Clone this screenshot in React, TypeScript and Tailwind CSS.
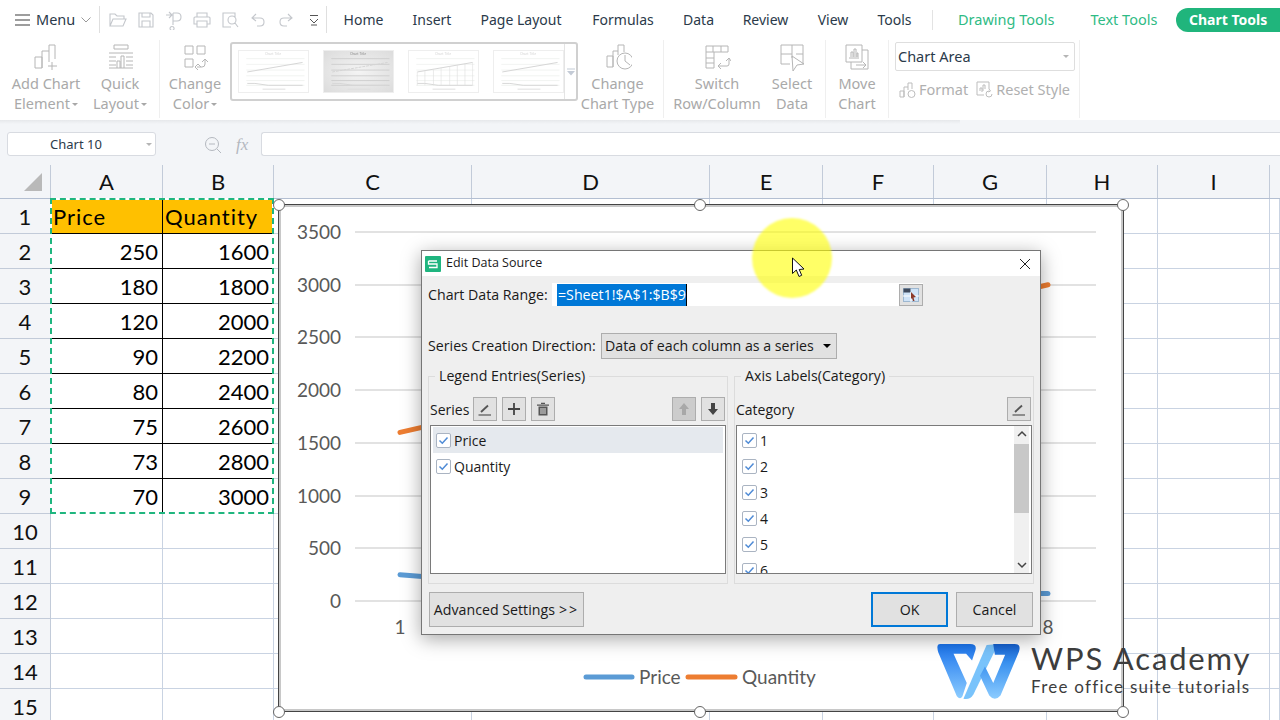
import React from "react";

const UI = { fontFamily: '"Noto Sans", "Open Sans", sans-serif' };
const SHEET = { fontFamily: 'Lato, "Noto Sans", sans-serif' };
const DLG = { fontFamily: '"Open Sans", "Noto Sans", sans-serif' };

function Ic({ w = 28, h = 30, children }: { w?: number; h?: number; children: React.ReactNode }) {
  return (
    <svg width={w} height={h} viewBox={`0 0 ${w} ${h}`} fill="none" stroke="#b6b6b6" strokeWidth="1" className="block shrink-0">
      {children}
    </svg>
  );
}

function Qa({ children }: { children: React.ReactNode }) {
  return (
    <div className="w-[28px] shrink-0 flex items-center justify-center">
      <svg width="20" height="20" viewBox="0 0 20 20" fill="none" stroke="#c4c7cc" strokeWidth="1.1">
        {children}
      </svg>
    </div>
  );
}

function Caret() {
  return <span className="inline-block ml-[2px] mb-[3px] border-x-[3px] border-x-transparent border-t-[3px] border-t-[#a8a8a8]" />;
}

function RBtn({ w, icon, a, b, caret }: { w: string; icon: React.ReactNode; a: string; b: string; caret?: boolean }) {
  return (
    <div className={`${w} flex flex-col items-center shrink-0`}>
      <div className="h-[30px] mt-[2px] flex items-center justify-center">{icon}</div>
      <div className="mt-px text-[14.5px] leading-[20px] text-[#a9a9a9] whitespace-nowrap text-center">{a}</div>
      <div className="text-[14.5px] leading-[20px] text-[#a9a9a9] whitespace-nowrap text-center">
        {b}
        {caret && <Caret />}
      </div>
    </div>
  );
}

function Thumb({ variant }: { variant: 0 | 1 | 2 }) {
  const lines = [8, 14, 20, 26, 31, 36];
  return (
    <svg
      width="71"
      height="43"
      viewBox="0 0 71 43"
      className={`block shrink-0 border border-[#eeeeee] blur-[0.5px] ${
        variant === 1 ? "bg-radial from-[#f4f4f4] to-[#dcdcdc]" : "bg-white"
      }`}
    >
      <text x="35" y="4.5" fontSize="3.5" textAnchor="middle" fill={variant === 1 ? "#8a8a8a" : "#d4d4d4"} stroke="none">
        Chart Title
      </text>
      {lines.map((y) => (
        <line key={y} x1="7" x2="68" y1={y} y2={y} stroke={variant === 1 ? "#cbcbcb" : "#f0f2f0"} strokeWidth={variant === 1 ? 0.9 : 1} />
      ))}
      <path d="M8 22 L66 12" stroke="#d4d4d4" strokeWidth="1" fill="none" strokeDasharray={variant === 1 ? "3 1" : undefined} />
      <path d="M8 34 L16 34 L30 36 L66 36" stroke="#d6d6d6" strokeWidth="1" fill="none" />
      {variant === 2 &&
        [8, 16, 25, 33, 42, 50, 58, 66].map((x) => (
          <line key={x} x1={x} x2={x} y1={22 - (x - 8) * 0.17} y2="36" stroke="#dedede" strokeWidth="0.6" />
        ))}
      <rect x="24" y="39.5" width="24" height="1" fill="#dedede" stroke="none" />
    </svg>
  );
}

const colW = "grid grid-cols-[51px_112px_111px_198px_238px_113px_111px_113px_111px_112px_10px]";
const letters = ["A", "B", "C", "D", "E", "F", "G", "H", "I"];
const rows: [string, string][] = [
  ["Price", "Quantity"],
  ["250", "1600"],
  ["180", "1800"],
  ["120", "2000"],
  ["90", "2200"],
  ["80", "2400"],
  ["75", "2600"],
  ["73", "2800"],
  ["70", "3000"],
];

function Check() {
  return (
    <span className="w-[15px] h-[15px] rounded-[2px] border border-[#aab4c2] bg-white flex items-center justify-center shrink-0">
      <svg width="11" height="11" viewBox="0 0 11 11" fill="none" stroke="#4f8bd6" strokeWidth="1.5">
        <path d="M1.5 5.5 L4.3 8.2 L9.5 2.5" />
      </svg>
    </span>
  );
}

function IconBtn({ children, dim }: { children: React.ReactNode; dim?: boolean }) {
  return (
    <div className={`w-[24px] h-[24px] border border-[#adadad] flex items-center justify-center shrink-0 ${dim ? "bg-[#cccccc]" : "bg-[#e1e1e1]"}`}>
      {children}
    </div>
  );
}

const Pen = () => (
  <svg width="16" height="16" viewBox="0 0 16 16" fill="none" stroke="#555" strokeWidth="1.2">
    <path d="M1.5 14 H14" />
    <path d="M4 11 L11 4.5" strokeWidth="1.8" />
  </svg>
);

function Row({ label, sel }: { label: string; sel?: boolean }) {
  return (
    <div className={`h-[26px] flex items-center gap-[3px] pl-[3px] shrink-0 ${sel ? "bg-[#e5e9ee]" : ""}`}>
      <Check />
      <span className="text-[14px] text-[#1a1a1a]">{label}</span>
    </div>
  );
}

export default function App() {
  const ys = [232, 285, 337, 390, 443, 496, 548, 601];
  const yl = ["3500", "3000", "2500", "2000", "1500", "1000", "500", "0"];
  const px = (i: number) => 400 + (i * 648) / 7;
  const val = (v: number) => 601 - v * 0.1054;
  const price = [250, 180, 120, 90, 80, 75, 73, 70];
  const qty = [1600, 1800, 2000, 2200, 2400, 2600, 2800, 3000];
  const handles = [
    [279, 205],
    [700, 205],
    [1123, 205],
    [279, 712],
    [700, 712],
    [1123, 712],
  ];
  const tabs: [string, string][] = [
    ["Home", "w-[71px]"],
    ["Insert", "w-[66px]"],
    ["Page Layout", "w-[112px]"],
    ["Formulas", "w-[92px]"],
    ["Data", "w-[59px]"],
    ["Review", "w-[75px]"],
    ["View", "w-[60px]"],
    ["Tools", "w-[63px]"],
  ];

  return (
    <div className="relative w-[1280px] h-[720px] overflow-hidden bg-white" style={UI}>
      {/* Tabs bar */}
      <div className="h-[40px] flex items-center bg-white pb-px">
        <div className="w-[15px] shrink-0" />
        <svg className="shrink-0" width="15" height="12" viewBox="0 0 15 12" stroke="#3c3c3c" strokeWidth="1.1">
          <path d="M0 1 H15 M0 6 H15 M0 11 H15" />
        </svg>
        <span className="ml-[6px] w-[39px] shrink-0 text-[14.5px] text-[#2b3a4a]">Menu</span>
        <svg className="ml-[6px] shrink-0" width="10" height="6" viewBox="0 0 10 6" fill="none" stroke="#999">
          <path d="M0.5 0.5 L5 5 L9.5 0.5" />
        </svg>
        <div className="ml-[8px] w-px h-[27px] bg-[#dfdfdf] shrink-0" />
        <div className="w-[4px] shrink-0" />
        <Qa>
          <path d="M2 16 V4 H7 L9 6 H16 V9 M2 16 L5 9 H18 L15 16 Z" />
        </Qa>
        <Qa>
          <path d="M3 3 H15 L17 5 V17 H3 Z M6 3 V7 H14 V3 M6 17 V11 H14 V17" />
        </Qa>
        <Qa>
          <path d="M2 5 H8 M5 2 L8 5 L5 8 M9 3 H13 Q17 3 17 7 Q17 11 13 11 H9 V3 M9 11 V15 M8 16.5 a2 2 0 1 0 0.1 0" />
        </Qa>
        <Qa>
          <path d="M5 7 V3 H15 V7 M2 8 Q2 7 3 7 H17 Q18 7 18 8 V14 H15 M5 14 H2 V8 M5 11 H15 V17 H5 Z" />
        </Qa>
        <Qa>
          <path d="M11 3 H3 V17 H11 M3 3 H15 V8 M8 10 a4 4 0 1 0 8 0 a4 4 0 1 0 -8 0 M15 13 L18 17" />
        </Qa>
        <Qa>
          <path d="M5 8 H12 Q16 8 16 12 Q16 16 12 16 H9 M8 4 L4 8 L8 11" />
        </Qa>
        <Qa>
          <path d="M15 8 H8 Q4 8 4 12 Q4 16 8 16 H11 M12 4 L16 8 L12 11" />
        </Qa>
        <div className="w-[28px] shrink-0 flex items-center justify-center">
          <svg width="12" height="12" viewBox="0 0 12 12" fill="none" stroke="#555">
            <path d="M2 1.5 H10 M2 5 L6 9 L10 5 M3 11 H9" />
          </svg>
        </div>
        <div className="ml-[-2px] w-px h-[27px] bg-[#dfdfdf] shrink-0" />
        <div className="ml-px flex items-center text-[14px] text-[#2b3a4a] whitespace-nowrap shrink-0">
          {tabs.map(([t, w]) => (
            <span key={t} className={`${w} text-center`}>
              {t}
            </span>
          ))}
        </div>
        <div className="ml-[6px] w-px h-[20px] bg-[#e3e3e3] shrink-0" />
        <span className="ml-[25px] shrink-0 text-[14.5px] text-[#2fbb85] whitespace-nowrap">Drawing Tools</span>
        <span className="ml-[36px] shrink-0 text-[14.5px] text-[#2fbb85] whitespace-nowrap">Text Tools</span>
        <div className="ml-auto h-[24px] w-[104px] shrink-0 rounded-l-full bg-[#20b57c] flex items-center pl-[13px] text-[14px] font-bold text-white whitespace-nowrap">
          Chart Tools
        </div>
      </div>

      {/* Ribbon */}
      <div className="relative h-[80px] flex bg-white">
        <div className="flex pl-[8px] pr-[3px] border-r border-[#efefef] h-[78px] w-[160px] shrink-0">
          <RBtn
            w="w-[76px]"
            a="Add Chart"
            b="Element"
            caret
            icon={
              <Ic>
                <path d="M3 15 H10 V26 H3 Z M10 26 V9 H17 V20 M17 9 V3 H23 V17 M20 20 V28 M16 24 H25" />
              </Ic>
            }
          />
          <RBtn
            w="w-[72px]"
            a="Quick"
            b="Layout"
            caret
            icon={
              <Ic>
                <path d="M8 3 H22 V7 H8 Z M3 11 H27 M3 26 H27 M3 15 H10 M3 19 H10 M3 23 H10 M20 15 H27 M20 19 H27 M20 23 H27 M11 26 V19 H14 V26 M15 26 V14 H18 V26" />
              </Ic>
            }
          />
        </div>
        <RBtn
          w="w-[70px]"
          a="Change"
          b="Color"
          caret
          icon={
            <Ic>
              <path d="M4 4 H12 V12 H4 Z M16 4 H24 V12 H16 Z M4 17 H12 V25 H4 Z M16 25 H21 Q24 25 24 22 V17 M21 20 L24 17 L27 20 M20 25 L17 22 M17 28 L14 25 L17 22" />
            </Ic>
          }
        />
        <div className="mt-[2px] h-[59px] w-[348px] shrink-0 rounded-[3px] border-2 border-[#d0d0d0] flex items-center">
          <div className="flex-1 flex items-center pl-[6px] gap-[14px]">
            <Thumb variant={0} />
            <Thumb variant={1} />
            <Thumb variant={2} />
            <Thumb variant={0} />
          </div>
          <div className="w-[13px] h-full border-l border-[#e4e4e4] flex items-center justify-center">
            <svg width="8" height="8" viewBox="0 0 8 8" fill="#c4cbd6">
              <path d="M0 0.5 H8 V1.5 H0 Z M0 3 H8 L4 7.5 Z" />
            </svg>
          </div>
        </div>
        <div className="w-[86px] shrink-0 pr-[6px] border-r border-[#efefef] h-[78px]">
          <RBtn
            w="w-[79px]"
            a="Change"
            b="Chart Type"
            icon={
              <Ic>
                <path d="M3 14 H9 V25 H3 Z M9 25 V9 H14 M14 13 V3 H20 V10 M13 19 a8 8 0 1 0 16 0 a8 8 0 1 0 -16 0 M21 13 V19 L26 23" />
              </Ic>
            }
          />
        </div>
        <div className="flex w-[162px] shrink-0 border-r border-[#efefef] h-[78px]">
          <RBtn
            w="w-[106px]"
            a="Switch"
            b="Row/Column"
            icon={
              <Ic>
                <path d="M3 4 H25 V10 H3 Z M10 4 V10 M18 4 V10 M3 10 V26 H11 V10 M3 16 H11 M3 21 H11 M15 24 H24 Q26 24 26 22 V16 M23 19 L26 16 L28 19 M18 21 L15 24 L18 27" />
              </Ic>
            }
          />
          <RBtn
            w="w-[44px]"
            a="Select"
            b="Data"
            icon={
              <Ic>
                <path d="M3 3 H25 V22 M3 3 V22 H12 M3 12 H14 M14 3 V16 M18 12 H25 M14 14 L26 22 L19 23 L15 29 Z" />
              </Ic>
            }
          />
        </div>
        <div className="w-[63px] shrink-0 border-r border-[#efefef] h-[78px]">
          <RBtn
            w="w-[62px]"
            a="Move"
            b="Chart"
            icon={
              <Ic>
                <path d="M3 3 H19 V20 H3 Z M19 8 H25 V27 H8 V20 M6 16 H16 M8 15 V10 H10 V15 M11 15 V7 H13 V15 M14 15 V11 H15 V15 M13 23 H23 M20 20 L23 23 L20 26" />
              </Ic>
            }
          />
        </div>
        <div className="w-[191px] shrink-0 border-r border-[#efefef] h-[78px] pl-[6px] pt-[2px]">
          <div className="w-[180px] h-[29px] border border-[#dedede] rounded-[2px] flex items-center justify-between pl-[2px] pr-[5px]">
            <span className="text-[14.5px] text-[#2b3a4a]">Chart Area</span>
            <span className="border-x-[3px] border-x-transparent border-t-[3px] border-t-[#b5b5b5]" />
          </div>
          <div className="mt-[8px] pl-[4px] flex items-center text-[14.5px] text-[#b0b0b0] whitespace-nowrap">
            <svg width="18" height="18" viewBox="0 0 18 18" fill="none" stroke="#bdbdbd">
              <path d="M1 10 H5 V16 H1 Z M5 16 V6 H9 V9 M9 6 V2 H13 V8 M9 13 a3.5 3.5 0 1 0 7 0 a3.5 3.5 0 1 0 -7 0" />
            </svg>
            <span className="ml-[2px]">Format</span>
            <svg className="ml-[8px]" width="18" height="18" viewBox="0 0 18 18" fill="none" stroke="#bdbdbd">
              <path d="M1 1 H13 V8 M1 1 V14 H8 M4 10 V7 H6 V11 M7 10 V4 H9 V8 M16 13 a3 3 0 1 1 -3 -3 M13 8 L14.5 10 L12.5 11" />
            </svg>
            <span className="ml-[2px]">Reset Style</span>
          </div>
        </div>
      </div>

      {/* Formula bar */}
      <div className="relative h-[45px] bg-[#f3f5f8] flex items-start pt-[12px]">
        <div className="absolute left-0 top-0 w-[960px] h-[4px] bg-gradient-to-b from-[#e6e8eb] to-[#f3f5f8]" />
        <div className="ml-[7px] w-[149px] h-[24px] bg-white border border-[#d8dbe1] rounded-[3px] flex items-center relative pl-[42px] pt-px text-[13px] text-[#2b3a4a]">
          Chart 10
          <span className="absolute right-[3px] top-[10px] border-x-[3px] border-x-transparent border-t-[3px] border-t-[#b5b5b5]" />
        </div>
        <div className="ml-[48px] mt-[4px] flex items-center">
          <svg width="18" height="18" viewBox="0 0 18 18" fill="none" stroke="#b4b8bf">
            <circle cx="8" cy="8" r="6.5" />
            <path d="M5 8 H11 M13 13 L17 17" />
          </svg>
          <span className="ml-[14px] w-[18px] text-[17px] leading-[18px] italic text-[#b4b8bf]" style={{ fontFamily: '"Liberation Serif", serif' }}>
            fx
          </span>
        </div>
        <div className="ml-[7px] flex-1 h-[24px] bg-white border-y border-l border-[#d8dbe1] rounded-l-[3px]" />
      </div>

      {/* Sheet */}
      <div style={SHEET}>
        <div className={`${colW} h-[34px] bg-[#f3f5f8] border-b border-[#b3bfd2]`}>
          <div className="border-r border-[#c2cbd9] flex items-center justify-end pr-[8px]">
            <svg width="18" height="18" viewBox="0 0 18 18">
              <path d="M18 0 V18 H0 Z" fill="#b9b9b9" />
            </svg>
          </div>
          {letters.map((l) => (
            <div key={l} className="border-r border-[#c2cbd9] flex items-center justify-center text-[22px] text-[#111]">
              {l}
            </div>
          ))}
          <div />
        </div>
        {Array.from({ length: 15 }).map((_, r) => (
          <div key={r} className={`${colW} h-[35px]`}>
            <div className="bg-[#f3f5f8] border-b border-r border-[#c2cbd9] flex items-center justify-center text-[22px] text-[#111]">{r + 1}</div>
            {Array.from({ length: 10 }).map((_, c) => {
              const inTable = r < 9 && c < 2;
              const txt = inTable ? rows[r][c] : "";
              return (
                <div
                  key={c}
                  className={`flex items-center text-[22px] text-black pl-[2px] pr-[4px] whitespace-nowrap ${
                    inTable ? "border-b border-r border-black" : "border-b border-r border-[#c9d3e2]"
                  } ${r === 0 && c < 2 ? "bg-[#ffc000] justify-start tracking-[1px]" : "justify-end"}`}
                >
                  {txt}
                </div>
              );
            })}
          </div>
        ))}
      </div>

      {/* Marching ants */}
      <div className="absolute left-[50px] top-[198px] w-[224px] h-[316px] border-2 border-white">
        <div className="absolute -inset-[2px] border-2 border-dashed border-[#1fb67f]" />
      </div>

      {/* Chart */}
      <div className="absolute left-[279px] top-[205px] w-[844px] h-[506px] bg-white border-2 border-[#c8c8c8] outline outline-1 outline-[#444]">
        <svg className="absolute -left-[2px] -top-[2px]" width="844" height="506" viewBox="279 205 844 506" style={SHEET}>
          {ys.map((y, i) => (
            <g key={y}>
              <line x1="355" x2="1096" y1={y} y2={y} stroke="#d9d9d9" strokeWidth="1.5" />
              <text x="341" y={y + 7} textAnchor="end" fontSize="19" fill="#595959">
                {yl[i]}
              </text>
            </g>
          ))}
          <polyline points={price.map((v, i) => `${px(i)},${val(v)}`).join(" ")} fill="none" stroke="#5b9bd5" strokeWidth="5" strokeLinecap="round" />
          <polyline points={qty.map((v, i) => `${px(i)},${val(v)}`).join(" ")} fill="none" stroke="#ed7d31" strokeWidth="5" strokeLinecap="round" />
          <text x={px(0)} y="634" textAnchor="middle" fontSize="19" fill="#595959">
            1
          </text>
          <text x={px(7)} y="634" textAnchor="middle" fontSize="19" fill="#595959">
            8
          </text>
          <line x1="586" x2="632" y1="677" y2="677" stroke="#5b9bd5" strokeWidth="5" strokeLinecap="round" />
          <text x="639" y="684" fontSize="19" fill="#595959">
            Price
          </text>
          <line x1="688" x2="735" y1="677" y2="677" stroke="#ed7d31" strokeWidth="5" strokeLinecap="round" />
          <text x="742" y="684" fontSize="19" fill="#595959">
            Quantity
          </text>
        </svg>
      </div>
      {handles.map(([x, y]) => (
        <div
          key={`${x}-${y}`}
          className="absolute w-[12px] h-[12px] rounded-full bg-white border border-[#666]"
          style={{ left: x - 6, top: y - 6 }}
        />
      ))}

      {/* WPS Academy */}
      <div className="absolute left-[937px] top-[643px] flex items-start">
        <svg width="84" height="58" viewBox="20 20 254 174" className="shrink-0">
          <defs>
            <linearGradient id="wpsA" x1="0" y1="0" x2="0" y2="1">
              <stop offset="0" stopColor="#1a73ec" />
              <stop offset="1" stopColor="#8cccff" />
            </linearGradient>
            <linearGradient id="wpsB" x1="0" y1="0" x2="0" y2="1">
              <stop offset="0" stopColor="#1560cf" />
              <stop offset="0.35" stopColor="#3a91ef" />
              <stop offset="1" stopColor="#8cccff" />
            </linearGradient>
          </defs>
          <path d="M30 22 H120 Q142 22 136 42 L126 72 L108 52 H70 L110 140 L97 180 Q90 192 80 180 L24 48 Q16 22 30 22 Z" fill="url(#wpsA)" />
          <path d="M170 25 L205 22 L130 175 Q120 192 100 188 Z" fill="#79c3fb" />
          <path d="M190 22 H255 Q275 22 268 45 L212 178 Q195 198 178 178 L150 118 L165 90 L190 140 L226 55 H195 Z" fill="url(#wpsB)" />
        </svg>
        <div className="ml-[10px] text-[#3d3d3d] whitespace-nowrap" style={{ fontFamily: 'Lato, "Noto Sans", sans-serif' }}>
          <div className="text-[31px] leading-[30px] tracking-[1.85px]">WPS Academy</div>
          <div className="mt-[3px] text-[17px] leading-[22px] tracking-[1.26px]">Free office suite tutorials</div>
        </div>
      </div>

      {/* Dialog */}
      <div
        className="absolute left-[421px] top-[250px] w-[620px] h-[385px] bg-[#efefef] border border-[#767676] shadow-[0_4px_18px_rgba(0,0,0,0.35)] flex flex-col text-[#1a1a1a]"
        style={DLG}
      >
        <div className="h-[25px] bg-white flex items-center shrink-0 pl-[3px] pr-[9px]">
          <svg width="16" height="16" viewBox="0 0 16 16" className="shrink-0">
            <rect width="16" height="16" rx="1" fill="#1fb57f" />
            <path d="M3.5 5 H12 M3.5 5 V8 H12 V11.5 H4" fill="none" stroke="#fff" strokeWidth="1.3" />
          </svg>
          <span className="ml-[5px] text-[12.5px]">Edit Data Source</span>
          <svg className="ml-auto" width="12" height="12" viewBox="0 0 12 12" stroke="#222" strokeWidth="1">
            <path d="M1 1 L11 11 M11 1 L1 11" />
          </svg>
        </div>
        <div className="flex-1 px-[6px] flex flex-col">
          <div className="mt-[7px] h-[23px] flex items-center">
            <span className="w-[124px] text-[14.2px] pt-px shrink-0">Chart Data Range:</span>
            <div className="w-[371px] h-[23px] bg-white flex items-center pl-[5px]">
              <span className="bg-[#0078d7] text-white text-[14.2px] leading-[22px] pl-px border-r border-black">=Sheet1!$A$1:$B$9</span>
              <div className="ml-auto w-[24px] h-[22px] bg-[#e1e1e1] border border-[#adadad] flex items-center justify-center">
                <svg width="16" height="14" viewBox="0 0 16 14">
                  <rect x="0.5" y="0.5" width="15" height="13" fill="#cfe3f7" stroke="#9db7d0" />
                  <rect x="0.5" y="0.5" width="7" height="4" fill="#3f4a5c" />
                  <path d="M0 8 H16 M8 4 V14" stroke="#fff" />
                  <path d="M8 4 L13 9 L10.5 9.5 L11.5 13 L10 13 L9 10 L8 11 Z" fill="#8c3a2a" />
                </svg>
              </div>
            </div>
          </div>
          <div className="mt-[26px] h-[27px] flex items-center">
            <span className="w-[173px] text-[14.2px] shrink-0">Series Creation Direction:</span>
            <div className="w-[236px] h-[26px] bg-[#e1e1e1] border border-[#adadad] flex items-center pl-[3px] pr-[5px] justify-between">
              <span className="text-[14.2px]">Data of each column as a series</span>
              <span className="border-x-[4px] border-x-transparent border-t-[4px] border-t-black" />
            </div>
          </div>
          <div className="mt-[17px] h-[208px] flex gap-[6px]">
            <div className="relative w-[300px] h-full border border-[#dcdcdc] pl-px pr-px pt-[20px]">
              <span className="absolute left-[6px] -top-[10px] bg-[#efefef] px-[4px] text-[14.2px] leading-[18px]">Legend Entries(Series)</span>
              <div className="h-[24px] flex items-center gap-[5px] pr-[1px]">
                <span className="w-[38px] text-[14px]">Series</span>
                <IconBtn>
                  <Pen />
                </IconBtn>
                <IconBtn>
                  <svg width="16" height="16" viewBox="0 0 16 16" stroke="#444" strokeWidth="1.8">
                    <path d="M8 2 V14 M2 8 H14" />
                  </svg>
                </IconBtn>
                <IconBtn>
                  <svg width="14" height="14" viewBox="0 0 14 14" fill="#555">
                    <path d="M1 2.5 H13 V3.8 H1 Z M5 0.8 H9 V2 H5 Z M2.5 4.5 H11.5 V13.5 H2.5 Z" />
                    <path d="M5 6 V12 M7 6 V12 M9 6 V12" stroke="#e1e1e1" />
                  </svg>
                </IconBtn>
                <div className="flex-1" />
                <IconBtn dim>
                  <svg width="12" height="14" viewBox="0 0 12 14" fill="#a8a8a8">
                    <path d="M6 1 L11 7 H8 V13 H4 V7 H1 Z" />
                  </svg>
                </IconBtn>
                <IconBtn>
                  <svg width="12" height="14" viewBox="0 0 12 14" fill="#444">
                    <path d="M6 13 L11 7 H8 V1 H4 V7 H1 Z" />
                  </svg>
                </IconBtn>
              </div>
              <div className="mt-[4px] h-[149px] w-[296px] bg-white border border-[#7a7a7a] py-px px-[2px] flex flex-col">
                <Row label="Price" sel />
                <Row label="Quantity" />
              </div>
            </div>
            <div className="relative w-[300px] h-full border border-[#dcdcdc] pl-px pr-px pt-[20px]">
              <span className="absolute left-[6px] -top-[10px] bg-[#efefef] px-[4px] text-[14.2px] leading-[18px]">Axis Labels(Category)</span>
              <div className="h-[24px] flex items-center justify-between pr-[1px]">
                <span className="text-[14px]">Category</span>
                <IconBtn>
                  <Pen />
                </IconBtn>
              </div>
              <div className="mt-[4px] h-[149px] w-[296px] bg-white border border-[#7a7a7a] flex overflow-hidden relative">
                <div className="flex-1 pt-px pl-[2px] flex flex-col overflow-hidden">
                  {["1", "2", "3", "4", "5", "6"].map((n) => (
                    <Row key={n} label={n} />
                  ))}
                </div>
                <div className="w-[15px] mr-[2px] bg-[#f0f0f0] flex flex-col items-center shrink-0">
                  <svg className="mt-[4px]" width="10" height="8" viewBox="0 0 10 8" fill="none" stroke="#444" strokeWidth="1.5">
                    <path d="M1 6 L5 2 L9 6" />
                  </svg>
                  <div className="mt-[6px] w-full h-[69px] bg-[#c8c8c8]" />
                  <svg className="mt-auto mb-[4px]" width="10" height="8" viewBox="0 0 10 8" fill="none" stroke="#444" strokeWidth="1.5">
                    <path d="M1 2 L5 6 L9 2" />
                  </svg>
                </div>
              </div>
            </div>
          </div>
          <div className="mt-[8px] mx-px h-[35px] flex text-[14.2px]">
            <div className="w-[155px] bg-[#e1e1e1] border border-[#adadad] flex items-center justify-center gap-[4px]">
              Advanced Settings <span className="tracking-[2px]">&gt;&gt;</span>
            </div>
            <div className="flex-1" />
            <div className="w-[77px] bg-[#e1e1e1] border-2 border-[#0078d7] flex items-center justify-center">OK</div>
            <div className="ml-[8px] w-[77px] bg-[#e1e1e1] border border-[#adadad] flex items-center justify-center">Cancel</div>
          </div>
        </div>
      </div>

      {/* Pointer highlight */}
      <div className="absolute left-[752px] top-[218px] w-[80px] h-[80px] rounded-full bg-[#ffff00]/60 blur-[1px]" />
      <svg className="absolute left-[791px] top-[257px]" width="16" height="22" viewBox="0 0 16 22" fill="#fff" stroke="#111" strokeWidth="1">
        <path d="M1.5 1 V16.5 L5.3 13 L8 19.5 L10.7 18.3 L8.2 12.5 L13 12 Z" />
      </svg>
    </div>
  );
}
